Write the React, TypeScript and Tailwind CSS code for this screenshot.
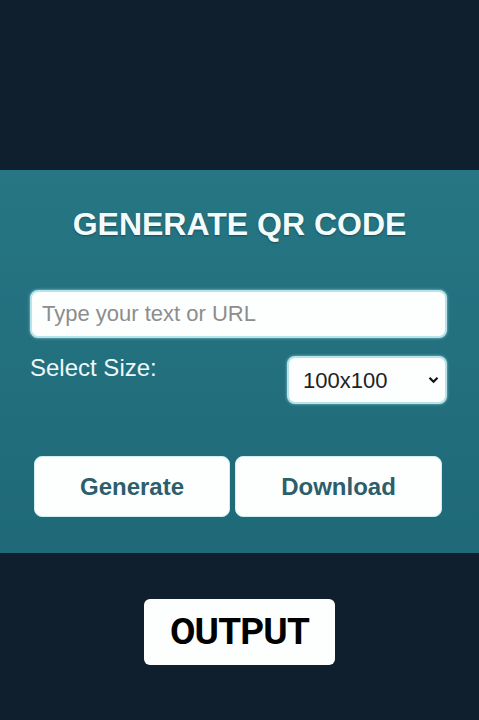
import { useState } from "react";

export default function App() {
  const [text, setText] = useState("");
  const [size, setSize] = useState("100x100");

  return (
    <div className="min-h-screen w-full bg-[#0f1f2d] pt-[170px] font-['Liberation_Sans',Arial,sans-serif]">
      <div className="h-[383px] w-full bg-gradient-to-b from-[#267684] to-[#1f6978] px-[30px] pt-[35px]">
        <h1 className="text-center text-[32px] font-bold leading-[38px] text-[#f3fbfc] [text-shadow:0_1px_2px_rgba(0,0,0,0.35)]">
          GENERATE QR CODE
        </h1>

        <input
          value={text}
          onChange={(e) => setText(e.target.value)}
          placeholder="Type your text or URL"
          className="mt-[47px] h-[48px] w-[417px] rounded-lg border-2 border-[#b7e3ea] bg-[#fdfefe] px-[10px] text-[22px] text-gray-800 shadow-[0_0_3px_rgba(190,240,248,0.7)] outline-none placeholder:text-[#8d8d8d]"
        />

        <div className="mt-[18px] flex items-start justify-between">
          <label className="mt-[-2px] text-[24px] leading-[28px] text-[#eef8f9]">Select Size:</label>
          <div className="relative mr-[2px]">
            <select
              value={size}
              onChange={(e) => setSize(e.target.value)}
              className="h-[48px] w-[160px] appearance-none rounded-lg border-2 border-[#b7e3ea] bg-[#fdfefe] pl-[14px] text-[22px] text-[#222] shadow-[0_0_3px_rgba(190,240,248,0.7)] outline-none"
            >
              <option>100x100</option>
              <option>200x200</option>
              <option>300x300</option>
            </select>
            <svg
              className="pointer-events-none absolute right-[8px] top-[20px]"
              width="11"
              height="8"
              viewBox="0 0 11 8"
            >
              <path d="M1.5 1.8 L5.5 5.8 L9.5 1.8" stroke="#111" strokeWidth="2.2" fill="none" />
            </svg>
          </div>
        </div>

        <div className="ml-[4px] mt-[52px] flex gap-[5px]">
          <button className="h-[61px] w-[196px] rounded-lg border border-[#cfeef2] bg-[#fdfefe] text-[24px] font-bold text-[#2c5e6c]">
            Generate
          </button>
          <button className="h-[61px] w-[207px] rounded-lg border border-[#cfeef2] bg-[#fdfefe] text-[24px] font-bold text-[#2c5e6c]">
            Download
          </button>
        </div>
      </div>

      <div className="mt-[46px] flex justify-center">
        <div className="flex h-[66px] w-[191px] items-center justify-center rounded-md bg-[#fdfefe]">
          <span className="font-['Roboto',sans-serif] text-[37px] font-bold tracking-[-0.8px] text-black">
            OUTPUT
          </span>
        </div>
      </div>
    </div>
  );
}
